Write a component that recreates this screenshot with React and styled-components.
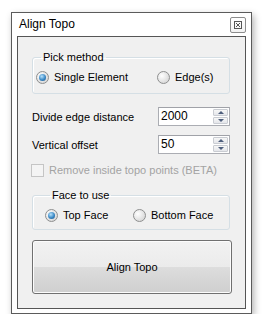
import styled, { createGlobalStyle } from "styled-components";

const GlobalStyle = createGlobalStyle`
body {
  margin: 0;
  background: #ffffff;
  font-family: "Liberation Sans", Arial, sans-serif;
  font-size: 11px;
  color: #000;
}
`;

const Window = styled.div`
  box-sizing: border-box;
  margin: 12px 0 0 11px;
  width: 241px;
  height: 302px;
  border: 1px solid #5b5b5b;
  background: #ffffff;
  box-shadow: 2px 3px 7px rgba(0, 0, 0, 0.3);
  padding: 0 5px 4px 5px;
  display: flex;
  flex-direction: column;
`;

const TitleBar = styled.div`
  height: 23px;
  display: flex;
  align-items: center;
  justify-content: space-between;
  padding-left: 2px;
`;

const Title = styled.span`
  font-size: 12px;
  color: #000;
  margin-top: -1px;
`;

const CloseBtn = styled.div`
  box-sizing: border-box;
  width: 16px;
  height: 16px;
  border: 1px solid #8c8c8c;
  border-radius: 2px;
  background: linear-gradient(#ffffff, #f2f2f2);
  display: flex;
  align-items: center;
  justify-content: center;
  margin-top: 1px;
`;

const Client = styled.div`
  flex: 1;
  border: 1px solid #555;
  background: #f0f0f0;
  padding: 14px 15px 0 14px;
  display: flex;
  flex-direction: column;
`;

const Group = styled.fieldset`
  box-sizing: border-box;
  margin: ${(p) => p.$top || 0}px 0 0 0;
  height: ${(p) => p.$h}px;
  border: 1px solid #d5dfe5;
  border-radius: 3px;
  padding: 6px 0 0 ${(p) => p.$pad}px;
  box-shadow: inset 1px 1px 0 #ffffff;
`;

const Legend = styled.legend`
  margin-left: 5px;
  padding: 0 2px;
  line-height: 13px;
  font-size: 11px;
`;

const RadioRow = styled.div`
  display: grid;
  grid-template-columns: ${(p) => p.$col}px auto;
  align-items: center;
`;

const Option = styled.label`
  display: flex;
  align-items: center;
  gap: 5px;
  line-height: 14px;
`;

const Radio = styled.span`
  box-sizing: border-box;
  width: 13px;
  height: 13px;
  border-radius: 50%;
  border: 1px solid #8e8f8f;
  background: radial-gradient(circle at 35% 35%, #ffffff, #dcdcdc 70%);
  display: flex;
  align-items: center;
  justify-content: center;
  &::after {
    content: "";
    display: ${(p) => (p.$on ? "block" : "none")};
    width: 7px;
    height: 7px;
    border-radius: 50%;
    background: radial-gradient(circle at 40% 35%, #b8e2fb, #3a89c6 55%, #1d4f7f);
  }
`;

const FieldRow = styled.div`
  display: flex;
  align-items: center;
  justify-content: space-between;
  margin-top: ${(p) => p.$top}px;
  padding-left: 0;
`;

const Spin = styled.div`
  box-sizing: border-box;
  width: 72px;
  height: 19px;
  border: 1px solid #abadb3;
  border-top-color: #a0a2a8;
  background: #fff;
  display: flex;
`;

const SpinText = styled.span`
  flex: 1;
  padding-left: 2px;
  font-size: 12px;
  line-height: 17px;
`;

const SpinButtons = styled.div`
  width: 15px;
  display: flex;
  flex-direction: column;
  gap: 1px;
  padding: 1px 1px 1px 0;
`;

const SpinBtn = styled.div`
  flex: 1;
  box-sizing: border-box;
  border: 1px solid #c9ccd2;
  border-radius: 1px;
  background: linear-gradient(#f7f7f7, #e4e6ea);
  display: flex;
  align-items: center;
  justify-content: center;
  &::after {
    content: "";
    width: 0;
    height: 0;
    border-left: 3px solid transparent;
    border-right: 3px solid transparent;
    ${(p) =>
      p.$up
        ? "border-bottom: 3px solid #4e5f7d;"
        : "border-top: 3px solid #4e5f7d;"}
  }
`;

const CheckRow = styled.label`
  display: flex;
  align-items: center;
  gap: 5px;
  margin: 9px 0 0 -1px;
  color: #a3a3a3;
  line-height: 14px;
`;

const Check = styled.span`
  box-sizing: border-box;
  width: 13px;
  height: 13px;
  border: 1px solid #c5c5c5;
  background: #f4f4f4;
`;

const Button = styled.div`
  box-sizing: border-box;
  margin-top: 10px;
  width: 200px;
  height: 54px;
  border: 1px solid #707070;
  border-radius: 3px;
  background: linear-gradient(#f2f2f2, #ebebeb 50%, #dddddd 50%, #cfcfcf);
  box-shadow: inset 0 0 0 1px #fcfcfc;
  display: flex;
  align-items: center;
  justify-content: center;
  font-size: 11px;
`;

function SpinBox({ value }) {
  return (
    <Spin>
      <SpinText>{value}</SpinText>
      <SpinButtons>
        <SpinBtn $up />
        <SpinBtn />
      </SpinButtons>
    </Spin>
  );
}

export default function App() {
  return (
    <>
      <GlobalStyle />
      <Window>
        <TitleBar>
          <Title>Align Topo</Title>
          <CloseBtn>
            <svg width="8" height="8" viewBox="0 0 8 8">
              <rect x="0.5" y="0.5" width="7" height="7" fill="none" stroke="#555" />
              <path d="M2 2 L6 6 M6 2 L2 6" stroke="#555" strokeWidth="1" />
            </svg>
          </CloseBtn>
        </TitleBar>
        <Client>
          <Group $h={43} $pad={3}>
            <Legend>Pick method</Legend>
            <RadioRow $col={121}>
              <Option>
                <Radio $on />
                Single Element
              </Option>
              <Option>
                <Radio />
                Edge(s)
              </Option>
            </RadioRow>
          </Group>
          <FieldRow $top={13}>
            <span>Divide edge distance</span>
            <SpinBox value="2000" />
          </FieldRow>
          <FieldRow $top={9}>
            <span>Vertical offset</span>
            <SpinBox value="50" />
          </FieldRow>
          <CheckRow>
            <Check />
            Remove inside topo points (BETA)
          </CheckRow>
          <Group $top={12} $h={41} $pad={12}>
            <Legend>Face to use</Legend>
            <RadioRow $col={88}>
              <Option>
                <Radio $on />
                Top Face
              </Option>
              <Option>
                <Radio />
                Bottom Face
              </Option>
            </RadioRow>
          </Group>
          <Button>Align Topo</Button>
        </Client>
      </Window>
    </>
  );
}
